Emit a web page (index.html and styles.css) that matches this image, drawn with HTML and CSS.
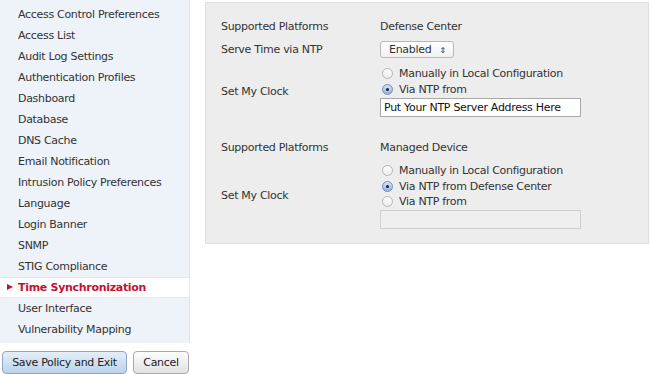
FILE: index.html
```html
<!DOCTYPE html>
<html lang="en">
<head>
    <meta charset="UTF-8">
    <title>Time Synchronization</title>
    <link rel="stylesheet" href="styles.css">
</head>
<body>
    <div class="page">
        <aside class="side">
            <ul class="side-nav">
                <li>Access Control Preferences</li>
                <li>Access List</li>
                <li>Audit Log Settings</li>
                <li>Authentication Profiles</li>
                <li>Dashboard</li>
                <li>Database</li>
                <li>DNS Cache</li>
                <li>Email Notification</li>
                <li>Intrusion Policy Preferences</li>
                <li>Language</li>
                <li>Login Banner</li>
                <li>SNMP</li>
                <li>STIG Compliance</li>
                <li class="active">Time Synchronization</li>
                <li>User Interface</li>
                <li>Vulnerability Mapping</li>
            </ul>
            <div class="side-buttons">
                <button class="btn btn-save">Save Policy and Exit</button>
                <button class="btn btn-cancel">Cancel</button>
            </div>
        </aside>

        <main class="panel">
            <!-- Defense Center -->
            <div class="row">
                <div class="label">Supported Platforms</div>
                <div class="value">Defense Center</div>
            </div>
            <div class="row row-select">
                <div class="label">Serve Time via NTP</div>
                <div class="value">
                    <span class="select">Enabled <span class="arrows">&#8661;</span></span>
                </div>
            </div>
            <div class="row row-clock">
                <div class="label">Set My Clock</div>
                <div class="value">
                    <div class="radio"><span class="dot"></span>Manually in Local Configuration</div>
                    <div class="radio"><span class="dot on"></span>Via NTP from</div>
                    <div class="text-input">Put Your NTP Server Address Here</div>
                </div>
            </div>

            <!-- Managed Device -->
            <div class="row row-section">
                <div class="label">Supported Platforms</div>
                <div class="value">Managed Device</div>
            </div>
            <div class="row row-clock">
                <div class="label">Set My Clock</div>
                <div class="value">
                    <div class="radio"><span class="dot"></span>Manually in Local Configuration</div>
                    <div class="radio"><span class="dot on"></span>Via NTP from Defense Center</div>
                    <div class="radio"><span class="dot"></span>Via NTP from</div>
                    <div class="text-input disabled"></div>
                </div>
            </div>
        </main>
    </div>
</body>
</html>
```

FILE: styles.css
```css
body {
    margin: 0;
    padding: 0;
    font-family: "DejaVu Sans", Verdana, sans-serif;
    font-size: 11px;
    letter-spacing: -0.3px;
    color: #333;
    background: #fff;
}

.page {
    display: flex;
    align-items: flex-start;
}

/* left menu */
.side {
    width: 190px;
    flex-shrink: 0;
}

.side-nav {
    list-style: none;
    margin: 0;
    padding: 4px 0 3px;
    background-color: #eef2f9;
    border-right: 1px solid #e2e7ef;
}

.side-nav li {
    height: 21px;
    line-height: 21px;
    padding-left: 18px;
    white-space: nowrap;
}

.side-nav li.active {
    background-color: #fff;
    color: #c4112f;
    font-weight: bold;
    position: relative;
    border-top: 1px solid #e4e8ee;
    border-bottom: 1px solid #e4e8ee;
    height: 19px;
    line-height: 20px;
}

.side-nav li.active::before {
    content: "";
    position: absolute;
    left: 7px;
    top: 6px;
    border-left: 6px solid #c4112f;
    border-top: 3.5px solid transparent;
    border-bottom: 3.5px solid transparent;
}

.side-buttons {
    display: flex;
    gap: 6px;
    padding: 8px 0 0 2px;
}

.btn {
    font-family: "DejaVu Sans", Verdana, sans-serif;
    font-size: 11px;
    letter-spacing: -0.3px;
    color: #222;
    height: 23px;
    padding: 0;
    border-radius: 4px;
    white-space: nowrap;
    cursor: pointer;
}

.btn-save {
    width: 125px;
    background: linear-gradient(#e4eef9, #bcd3ec);
    border: 1px solid #8ea6c4;
}

.btn-cancel {
    width: 56px;
    background: linear-gradient(#fdfdfd, #e2e2e2);
    border: 1px solid #a9a9a9;
}

/* settings panel */
.panel {
    margin: 2px 0 0 15px;
    width: 412px;
    padding: 14px 15px 14px;
    background-color: #ededed;
    border: 1px solid #dedede;
}

.row {
    display: flex;
    align-items: center;
    min-height: 18px;
}

.row + .row {
    margin-top: 5px;
}

.row.row-clock {
    margin-top: 8px;
}

.row.row-section {
    margin-top: 21px;
}

.row.row-section + .row-clock {
    margin-top: 7px;
}

.label {
    width: 159px;
    flex-shrink: 0;
}

.select {
    display: inline-block;
    height: 15px;
    line-height: 15px;
    padding: 0 7px 0 8px;
    border: 1px solid #b9b9b9;
    border-radius: 3px;
    background: linear-gradient(#ffffff, #f1f1f1);
}

.select .arrows {
    font-size: 8px;
    margin-left: 5px;
}

.radio {
    height: 15.5px;
    line-height: 15px;
    display: flex;
    align-items: center;
}

.dot {
    width: 11px;
    height: 11px;
    box-sizing: border-box;
    border-radius: 50%;
    border: 1px solid #b5b5b5;
    background: linear-gradient(#fdfdfd, #ececec);
    margin: 0 6px 0 2px;
    position: relative;
}

.dot.on {
    border-color: #6f8fba;
    background: linear-gradient(#d3e4f7, #8fb5e3);
}

.dot.on::after {
    content: "";
    position: absolute;
    left: 3px;
    top: 3px;
    width: 3px;
    height: 3px;
    border-radius: 50%;
    background: #222;
}

.text-input {
    width: 196px;
    height: 17px;
    line-height: 17px;
    padding-left: 3px;
    margin-top: 1px;
    background: #fff;
    border: 1px solid #a8a8a8;
    white-space: nowrap;
    color: #111;
}

.text-input.disabled {
    margin-top: 0;
    background: #efefef;
    border-color: #cfcfcf;
}
```
